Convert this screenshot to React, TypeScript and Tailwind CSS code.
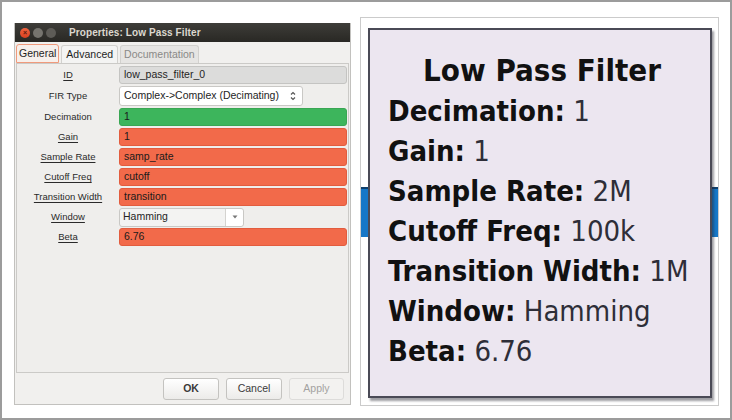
import React from 'react';

type Row = {
  label: string;
  underline?: boolean;
  kind: 'id' | 'select' | 'green' | 'orange' | 'combo';
  value: string;
};

const rows: Row[] = [
  { label: 'ID', underline: true, kind: 'id', value: 'low_pass_filter_0' },
  { label: 'FIR Type', kind: 'select', value: 'Complex->Complex (Decimating)' },
  { label: 'Decimation', kind: 'green', value: '1' },
  { label: 'Gain', underline: true, kind: 'orange', value: '1' },
  { label: 'Sample Rate', underline: true, kind: 'orange', value: 'samp_rate' },
  { label: 'Cutoff Freq', underline: true, kind: 'orange', value: 'cutoff' },
  { label: 'Transition Width', underline: true, kind: 'orange', value: 'transition' },
  { label: 'Window', underline: true, kind: 'combo', value: 'Hamming' },
  { label: 'Beta', underline: true, kind: 'orange', value: '6.76' },
];

const params: [string, string][] = [
  ['Decimation:', '1'],
  ['Gain:', '1'],
  ['Sample Rate:', '2M'],
  ['Cutoff Freq:', '100k'],
  ['Transition Width:', '1M'],
  ['Window:', 'Hamming'],
  ['Beta:', '6.76'],
];

function Field({ row }: { row: Row }) {
  if (row.kind === 'select') {
    return (
      <div className="w-[184px] h-[20px] rounded-[3px] border border-[#c9c8c5] bg-white flex items-center pl-[4px] pr-[6px] text-[10.5px] text-[#242424]">
        <span className="flex-1">{row.value}</span>
        <svg width="6" height="10" viewBox="0 0 6 10">
          <path d="M1 3.5L3 1.5 5 3.5M1 6.5L3 8.5 5 6.5" fill="none" stroke="#555" strokeWidth="1.2" />
        </svg>
      </div>
    );
  }
  if (row.kind === 'combo') {
    return (
      <div className="w-[125px] h-[19px] rounded-[3px] border border-[#c9c8c5] bg-[#f3f3f2] flex items-center text-[10.5px] text-[#242424]">
        <span className="flex-1 pl-[3px]">{row.value}</span>
        <span className="w-[18px] h-full border-l border-[#d4d3d0] bg-white rounded-r-[3px] flex items-center justify-center">
          <svg width="6" height="4" viewBox="0 0 6 4">
            <path d="M0.5 0.5h5L3 3.5z" fill="#777" />
          </svg>
        </span>
      </div>
    );
  }
  const tone =
    row.kind === 'id'
      ? 'bg-[#dcdcdb] border-[#c4c4c2] text-[#242424]'
      : row.kind === 'green'
        ? 'bg-[#3db55c] border-[#39a653] text-[#1a1a1a]'
        : 'bg-[#f26a4a] border-[#e25c3e] text-[#1a1a1a]';
  return (
    <div className={`w-[228px] h-[18px] rounded-[3px] border ${tone} flex items-center pl-[4px] text-[10.5px]`}>
      {row.value}
    </div>
  );
}

function Dialog() {
  return (
    <div className="ml-[12px] mt-[21px] w-[337px] h-[382px] flex flex-col bg-[#f1f0ee] border-l border-r border-b border-[#c2c1be] font-['Liberation_Sans',sans-serif]">
      <div className="h-[19px] shrink-0 bg-gradient-to-b from-[#3e3d39] to-[#292824] flex items-center pl-[5px]">
        <span className="w-[10px] h-[10px] rounded-full bg-gradient-to-b from-[#f0633f] to-[#d8401f] flex items-center justify-center text-[7px] leading-none text-[#5a1a0d] font-bold">
          ×
        </span>
        <span className="w-[10px] h-[10px] rounded-full bg-[#76746e] ml-[3px]" />
        <span className="w-[10px] h-[10px] rounded-full bg-[#5e5c57] ml-[3px]" />
        <span className="ml-[13px] text-[10px] font-bold text-[#dcd8cf] tracking-[0.1px]">Properties: Low Pass Filter</span>
      </div>
      <div className="h-[21px] shrink-0 flex items-end pl-[1px] gap-[2px] text-[10.5px]">
        <div className="h-[19px] px-[2px] flex items-center border border-[#f09a7c] rounded-t-[3px] bg-[#f7f0ec] text-[#1e1e1e]">General</div>
        <div className="h-[18px] px-[4px] flex items-center border border-b-0 border-[#d2d1ce] rounded-t-[3px] bg-[#f4f4f3] text-[#1e1e1e]">Advanced</div>
        <div className="h-[18px] px-[3px] flex items-center border border-b-0 border-[#d2d1ce] rounded-t-[3px] bg-[#e6e5e3] text-[#8a8987]">Documentation</div>
      </div>
      <div className="h-[310px] shrink-0 mx-[1px] border border-[#cbcac7] bg-[#efeeec] pt-[1px] flex flex-col">
        {rows.map((r) => (
          <div key={r.label} className={`flex items-center ${r.kind === 'select' ? 'h-[22px]' : 'h-[20px]'}`}>
            <span
              className={`w-[102px] text-center text-[9.5px] text-[#2a2a2a] ${r.underline ? 'underline underline-offset-[2px]' : ''}`}
            >
              {r.label}
            </span>
            <Field row={r} />
          </div>
        ))}
      </div>
      <div className="flex-1 flex items-center justify-end gap-[7px] pr-[6px] text-[10.5px]">
        <button className="w-[56px] h-[22px] rounded-[3px] border border-[#c4c3c0] bg-gradient-to-b from-white to-[#ecebe9] font-bold text-[#3a3a3a]">OK</button>
        <button className="w-[56px] h-[22px] rounded-[3px] border border-[#c4c3c0] bg-gradient-to-b from-white to-[#ecebe9] text-[#3a3a3a]">Cancel</button>
        <button className="w-[55px] h-[22px] rounded-[3px] border border-[#dddcda] bg-[#f3f2f0] text-[#a3a2a0]">Apply</button>
      </div>
    </div>
  );
}

function BlockView() {
  return (
    <div className="ml-[9px] mt-[15px] w-[359px] h-[389px] relative border border-[#cbcbcb] bg-white pl-[7px] pt-[10px]">
      <div className="absolute left-0 top-[169px] w-[8px] h-[50px] bg-[#1677c7] border-t-2 border-[#0e3f6c]" />
      <div className="absolute right-0 top-[169px] w-[7px] h-[50px] bg-[#1677c7] border-t-2 border-[#0e3f6c]" />
      <div className="relative w-[344px] h-[370px] border-2 border-[#4a4a56] bg-[#ece6f0] shadow-[2px_3px_2px_rgba(40,40,50,0.45)] pt-[19px] pl-[18px] font-['DejaVu_Sans_Condensed','DejaVu_Sans',sans-serif] text-[#111]">
        <div className="text-center pr-[14px] text-[31px] font-bold leading-[42px]">Low Pass Filter</div>
        {params.map(([k, v]) => (
          <div key={k} className="text-[29px] leading-[40px] whitespace-nowrap">
            <span className="font-bold">{k}</span> <span className="text-[#2e2e38]">{v}</span>
          </div>
        ))}
      </div>
    </div>
  );
}

export default function App() {
  return (
    <div className="w-[732px] h-[420px] border-2 border-[#9c9c9c] bg-white flex items-start overflow-hidden">
      <Dialog />
      <BlockView />
    </div>
  );
}
